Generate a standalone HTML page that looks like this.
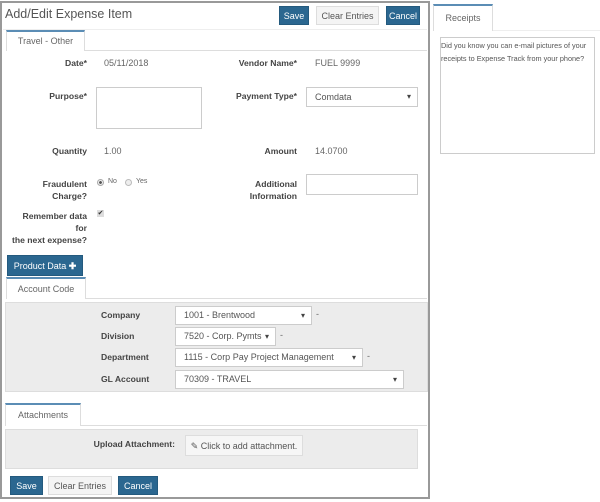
<!DOCTYPE html>
<html><head><meta charset="utf-8"><style>
*{box-sizing:border-box;margin:0;padding:0}
body{width:600px;height:502px;background:#fff;font-family:"Liberation Sans",sans-serif;font-size:9px;color:#666;position:relative;overflow:hidden}
.a{position:absolute;white-space:nowrap}
.lbl{position:absolute;font-weight:bold;color:#444;text-align:right;line-height:12px;white-space:nowrap;font-size:8.6px}
.btn{position:absolute;height:19px;line-height:19px;text-align:center;font-size:9px;color:#fff;background:#2b6790;border:1px solid #245a7e}
.btn.w{background:#f4f4f4;color:#555;border:1px solid #ddd}
.tab{position:absolute;border-top:2px solid #5b8db5;border-left:1px solid #ddd;border-right:1px solid #ddd;background:#fff;text-align:center;color:#666;font-size:9px}
.line{position:absolute;height:1px;background:#ddd}
.sel{position:absolute;height:19px;background:#fff;border:1px solid #ccc;line-height:17px;padding-left:8px;color:#555;font-size:9px}
.sel:after{content:"▾";position:absolute;right:6px;top:0;font-size:8px;color:#444}
.gray{position:absolute;background:#ececec;border:1px solid #ddd}
</style></head><body>
<div class="a" style="left:0;top:1px;width:430px;height:498px;border:2px solid #999"></div>
<div class="a" style="left:5px;top:7px;font-size:12.5px;color:#555">Add/Edit Expense Item</div>
<div class="btn" style="left:279px;top:6px;width:30px">Save</div>
<div class="btn w" style="left:316px;top:6px;width:63px">Clear Entries</div>
<div class="btn" style="left:386px;top:6px;width:34px">Cancel</div>
<div class="line" style="left:3px;top:29px;width:424px;background:#eee"></div>
<div class="tab" style="left:6px;top:30px;width:79px;height:21px;line-height:19px">Travel - Other</div>
<div class="line" style="left:85px;top:50px;width:342px"></div>

<div class="lbl" style="left:20px;top:57px;width:67px">Date*</div>
<div class="a" style="left:104px;top:57px;line-height:12px">05/11/2018</div>
<div class="lbl" style="left:200px;top:57px;width:97px">Vendor Name*</div>
<div class="a" style="left:315px;top:57px;line-height:12px">FUEL 9999</div>

<div class="lbl" style="left:20px;top:90px;width:67px">Purpose*</div>
<div class="a" style="left:96px;top:87px;width:106px;height:42px;border:1px solid #ccc"></div>
<div class="lbl" style="left:200px;top:90px;width:97px">Payment Type*</div>
<div class="sel" style="left:306px;top:87px;width:112px;height:20px;line-height:18px">Comdata</div>

<div class="lbl" style="left:20px;top:145px;width:67px">Quantity</div>
<div class="a" style="left:104px;top:145px;line-height:12px">1.00</div>
<div class="lbl" style="left:200px;top:145px;width:97px">Amount</div>
<div class="a" style="left:315px;top:145px;line-height:12px">14.0700</div>

<div class="lbl" style="left:20px;top:178px;width:67px">Fraudulent<br>Charge?</div>
<div class="a" style="left:97px;top:179px;width:7px;height:7px;border:1px solid #aaa;border-radius:50%;background:radial-gradient(#555 35%,#eee 45%)"></div>
<div class="a" style="left:108px;top:178px;font-size:7px">No</div>
<div class="a" style="left:125px;top:179px;width:7px;height:7px;border:1px solid #bbb;border-radius:50%;background:#eee"></div>
<div class="a" style="left:136px;top:178px;font-size:7px">Yes</div>
<div class="lbl" style="left:200px;top:178px;width:97px">Additional<br>Information</div>
<div class="a" style="left:306px;top:174px;width:112px;height:21px;border:1px solid #ccc"></div>

<div class="lbl" style="left:4px;top:210px;width:83px">Remember data<br>for<br>the next expense?</div>
<div class="a" style="left:97px;top:210px;width:7px;height:7px;background:#ddd;font-size:7px;line-height:7px;color:#333;text-align:center">✔</div>

<div class="btn" style="left:7px;top:255px;width:76px;height:21px;line-height:20px">Product Data <b>✚</b></div>
<div class="tab" style="left:6px;top:277px;width:80px;height:22px;line-height:20px">Account Code</div>
<div class="line" style="left:86px;top:298px;width:341px"></div>
<div class="gray" style="left:5px;top:302px;width:423px;height:90px"></div>
<div class="lbl" style="left:101px;top:309px;text-align:left">Company</div>
<div class="sel" style="left:175px;top:306px;width:137px">1001 - Brentwood</div>
<div class="a" style="left:316px;top:309px">-</div>
<div class="lbl" style="left:101px;top:330px;text-align:left">Division</div>
<div class="sel" style="left:175px;top:327px;width:101px">7520 - Corp. Pymts</div>
<div class="a" style="left:280px;top:330px">-</div>
<div class="lbl" style="left:101px;top:351px;text-align:left">Department</div>
<div class="sel" style="left:175px;top:348px;width:188px">1115 - Corp Pay Project Management</div>
<div class="a" style="left:367px;top:351px">-</div>
<div class="lbl" style="left:101px;top:373px;text-align:left">GL Account</div>
<div class="sel" style="left:175px;top:370px;width:229px">70309 - TRAVEL</div>

<div class="tab" style="left:5px;top:403px;width:76px;height:23px;line-height:21px">Attachments</div>
<div class="line" style="left:81px;top:425px;width:346px"></div>
<div class="gray" style="left:5px;top:429px;width:413px;height:40px"></div>
<div class="lbl" style="left:60px;top:438px;width:115px">Upload Attachment:</div>
<div class="btn w" style="left:185px;top:435px;width:118px;height:21px;line-height:20px;background:#f6f6f6">✎ Click to add attachment.</div>

<div class="btn" style="left:10px;top:476px;width:33px">Save</div>
<div class="btn w" style="left:48px;top:476px;width:64px">Clear Entries</div>
<div class="btn" style="left:118px;top:476px;width:40px">Cancel</div>

<div class="tab" style="left:433px;top:4px;width:60px;height:27px;line-height:25px">Receipts</div>
<div class="line" style="left:493px;top:30px;width:107px;background:#eee"></div>
<div class="a" style="left:440px;top:37px;width:155px;height:117px;border:1px solid #ccc;white-space:normal;font-size:7.3px;line-height:13px;padding:1px 0 0 0;color:#555">Did you know you can e-mail pictures of your receipts to Expense Track from your phone?</div>
</body></html>
